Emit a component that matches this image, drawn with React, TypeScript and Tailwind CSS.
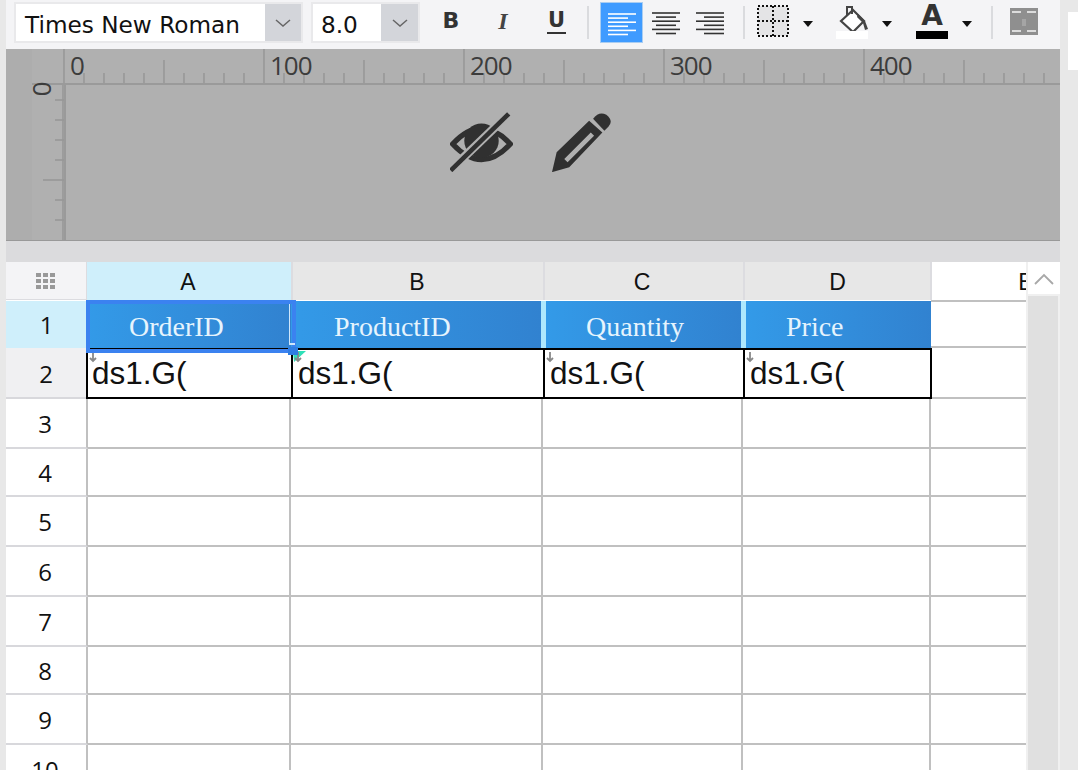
const rowFont = "font-['Open_Sans',sans-serif] text-[24px] text-[#111]"

function Chevron() {
  return (
    <svg width="16" height="8" viewBox="0 0 16 8" fill="none" stroke="#666" strokeWidth="1.5">
      <path d="M1 1l7 6 7-6" />
    </svg>
  )
}

function Caret({ className = '' }: { className?: string }) {
  return (
    <svg className={className} width="10" height="6" viewBox="0 0 10 6" fill="#111">
      <path d="M0 0h10L5 6z" />
    </svg>
  )
}

function Separator({ className = '' }: { className?: string }) {
  return <div className={`w-[2px] h-[33px] mt-[6px] bg-[#dadbde] ${className}`} />
}

function AlignIcon({ lines, color }: { lines: [number, number][]; color: string }) {
  return (
    <svg width="28" height="24" viewBox="0 0 28 24" stroke={color} strokeWidth="1.6">
      {lines.map(([x1, x2], i) => (
        <line key={i} x1={x1} x2={x2} y1={1 + i * 4.1} y2={1 + i * 4.1} />
      ))}
    </svg>
  )
}

function Toolbar() {
  return (
    <div className="h-[49px] bg-[#f4f4f6] flex items-start pl-[8px] font-['DejaVu_Sans',sans-serif]">
      <div className="flex mt-[2px] w-[289px] h-[41px] border-2 border-[#e9e9eb]">
        <div className="w-[249px] bg-white text-[23.2px] leading-[41px] pl-[9px] text-[#111]">Times New Roman</div>
        <div className="flex-1 bg-[#d3d5da] flex items-center justify-center">
          <Chevron />
        </div>
      </div>
      <div className="flex mt-[2px] ml-[8px] w-[109px] h-[41px] border-2 border-[#e9e9eb]">
        <div className="w-[68px] bg-white text-[23.2px] leading-[41px] pl-[8px] text-[#111]">8.0</div>
        <div className="flex-1 bg-[#d3d5da] flex items-center justify-center">
          <Chevron />
        </div>
      </div>
      <div className="w-[14px]" />
      <div className="w-[34px] text-center font-bold text-[22px] leading-[42px] text-[#333]">B</div>
      <div className="w-[18px]" />
      <div className="w-[34px] text-center font-['Liberation_Serif',serif] italic font-bold text-[24px] leading-[42px] text-[#444]">I</div>
      <div className="w-[19px]" />
      <div className="w-[34px] text-center pl-[1px]">
        <div className="inline-block mt-[9px] border-b-2 border-[#333] text-[21px] leading-[23px] px-[1px] text-[#333] font-bold">U</div>
      </div>
      <div className="w-[14px]" />
      <Separator />
      <div className="w-[11px]" />
      <div className="w-[43px] h-[41px] mt-[2px] bg-[#3f9bff] border border-[#a9cdf2] flex items-start justify-center pt-[10px]">
        <AlignIcon color="#fff" lines={[[0, 28], [0, 20], [0, 28], [0, 20], [0, 28], [0, 20]]} />
      </div>
      <div className="w-[9px]" />
      <div className="w-[28px] mt-[12px]">
        <AlignIcon color="#333" lines={[[0, 28], [4, 24], [0, 28], [4, 24], [0, 28], [4, 24]]} />
      </div>
      <div className="w-[16px]" />
      <div className="w-[28px] mt-[12px]">
        <AlignIcon color="#333" lines={[[0, 28], [8, 28], [0, 28], [8, 28], [0, 28], [8, 28]]} />
      </div>
      <div className="w-[19px]" />
      <Separator />
      <div className="w-[12px]" />
      <svg className="mt-[5px]" width="32" height="32" viewBox="0 0 32 32">
        <rect x="1" y="1" width="30" height="30" fill="#e4e4e6" />
        <g fill="none" stroke="#111" strokeWidth="2" strokeDasharray="2 2">
          <rect x="1" y="1" width="30" height="30" />
          <path d="M16 1v30M1 16h30" />
        </g>
      </svg>
      <Caret className="mt-[21px] ml-[14px]" />
      <svg className="mt-[5px] ml-[23px]" width="34" height="35" viewBox="0 0 34 35">
        <path d="M5 16L17 5l11 11-11 11z" fill="#fff" stroke="#444" strokeWidth="2.2" />
        <path d="M11 11V2h5v7" fill="none" stroke="#444" strokeWidth="2" />
        <path d="M22 9l7 7 3 8-3 1-2-7-6-6z" fill="#444" />
        <rect x="0" y="26" width="32" height="8" fill="#fff" />
      </svg>
      <Caret className="mt-[21px] ml-[12px]" />
      <div className="w-[24px]" />
      <div className="w-[32px] mt-[1px] flex flex-col items-center">
        <div className="font-bold text-[28px] leading-[30px] h-[30px] text-[#333]">A</div>
        <div className="w-[32px] h-[8px] bg-black" />
      </div>
      <Caret className="mt-[21px] ml-[14px]" />
      <div className="w-[19px]" />
      <Separator />
      <svg className="mt-[8px] ml-[17px]" width="28" height="27" viewBox="0 0 28 27">
        <rect width="28" height="27" fill="#8f8f8f" />
        <path d="M2 3h9v2H2zM17 3h9v2h-9zM2 22h9v2H2zM17 22h9v2h-9z" fill="#dcdcdc" />
        <path d="M12 11h4v7h-4z" fill="#a5a5a5" />
      </svg>
    </div>
  )
}

function Ruler() {
  const ticks = Array.from({ length: 50 }, (_, i) => i)
  return (
    <div className="relative h-[36px] border-b-2 border-[#9a9a9a] flex items-start pl-[32px]">
      <svg className="absolute left-0 top-0" width="1028" height="34" stroke="#989898" strokeWidth="1.6">
        {ticks.map((i) => (
          <line key={i} x1={32 + i * 20} x2={32 + i * 20} y1={i % 10 === 0 ? 0 : i % 5 === 0 ? 11 : 24} y2={34} />
        ))}
      </svg>
      {['0', '100', '200', '300', '400'].map((n) => (
        <div key={n} className="relative w-[200px] last:w-[196px] shrink-0 pl-[6px] text-[26px] tracking-[-1px] leading-[32px] text-[#3c3c3c] font-['Open_Sans',sans-serif]">
          {n}
        </div>
      ))}
    </div>
  )
}

function VerticalRuler() {
  return (
    <div className="relative w-[34px] shrink-0 border-r-2 border-[#9a9a9a]">
      <svg className="absolute left-0 top-0" width="32" height="155" stroke="#989898" strokeWidth="1.6">
        <line x1="31" x2="31" y1="0" y2="155" />
        {[15, 35, 55, 75, 115, 135].map((y) => (
          <line key={y} x1="23" x2="32" y1={y} y2={y} />
        ))}
        <line x1="11" x2="32" y1="95" y2="95" />
      </svg>
      <div className="w-[22px] h-[12px] text-center rotate-90 text-[26px] leading-[12px] text-[#3c3c3c] font-['Open_Sans',sans-serif] -mt-[2px]">0</div>
    </div>
  )
}

function HiddenPreview() {
  return (
    <div className="flex h-[192px] bg-[#b0b0b0] border-b border-[#999]">
      <div className="w-[26px] bg-[#adadad]" />
      <div className="flex-1 flex flex-col min-w-0">
        <Ruler />
        <div className="flex flex-1">
          <VerticalRuler />
          <div className="flex-1 flex justify-center items-start gap-[39px] pt-[27px] pr-[66px]">
            <svg width="63" height="60" viewBox="150 64 190 180">
              <path d="M158 160Q245 66 332 160Q245 254 158 160z" fill="none" stroke="#303030" strokeWidth="16" />
              <circle cx="245" cy="150" r="52" fill="#303030" />
              <line x1="145" y1="245" x2="335" y2="62" stroke="#b0b0b0" strokeWidth="26" />
              <line x1="152" y1="240" x2="327" y2="69" stroke="#303030" strokeWidth="14" />
            </svg>
            <svg width="59" height="60" viewBox="458 64 178 180">
              <path
                d="M458 245L472 185L570 90L610 125L510 230ZM495 205L505 215L585 135L575 125Z"
                fill="#303030"
                fillRule="evenodd"
              />
              <path d="M582 84Q600 60 622 72Q645 90 628 108L616 120Z" fill="#303030" />
            </svg>
          </div>
        </div>
      </div>
    </div>
  )
}

function ColumnHeaders() {
  const base = "shrink-0 h-full flex items-center justify-center pt-[3px] border-r-2 border-[#dcdce0] font-['Liberation_Sans',sans-serif] text-[23px] text-[#111]"
  return (
    <div className="flex h-[38px] overflow-hidden">
      <div className="w-[81px] shrink-0 h-full bg-[#f4f4f6] border-r border-b border-[#dcdce0] flex items-center justify-center">
        <svg width="20" height="16" viewBox="0 0 20 16" fill="#999">
          {[0, 6, 12].map((y) =>
            [0, 7, 14].map((x) => <rect key={`${x}-${y}`} x={x} y={y} width="5" height="4" />),
          )}
        </svg>
      </div>
      <div className={`${base} w-[206px] pr-[2px] bg-[#cfeffb]`}>A</div>
      <div className={`${base} w-[252px] pr-[2px] bg-[#e7e7e7]`}>B</div>
      <div className={`${base} w-[200px] pr-[4px] bg-[#e7e7e7]`}>C</div>
      <div className={`${base} w-[187px] bg-[#e7e7e7]`}>D</div>
      <div className="w-[190px] shrink-0 h-full flex items-center justify-center pt-[3px] pr-[2px] bg-white font-['Liberation_Sans',sans-serif] text-[23px] text-[#111]">E</div>
    </div>
  )
}

function TitleRow() {
  const cell = "shrink-0 h-full flex items-center pt-[4px] bg-gradient-to-r from-[#339ae8] to-[#3182d0] font-['Liberation_Serif',serif] text-[28px] text-[#e6f4fd]"
  return (
    <div className="flex h-[48px] pt-px">
      <div className={`w-[81px] shrink-0 h-full bg-[#cfeffb] flex items-center justify-center ${rowFont}`}>1</div>
      <div className={`${cell} w-[204px] pl-[42px] relative`}>
        OrderID
        <div className="absolute -left-[1px] -top-[1px] w-[210px] h-[53px] border-4 border-[#3b82f0] z-10" />
        <div className="absolute left-[202px] top-[3px] w-px h-[41px] bg-[#cfe6fb] z-10" />
        <div className="absolute left-[202px] top-[42px] w-[6px] h-[2px] bg-[#cfe6fb] z-10" />
        <div className="absolute left-[201px] top-[46px] w-[10px] h-[8px] bg-[#2f7de1] z-20" />
      </div>
      <div className={`${cell} w-[255px] pl-[43px] border-r-[5px] border-[#aee8fd]`}>ProductID</div>
      <div className={`${cell} w-[200px] pl-[40px] border-r-[5px] border-[#aee8fd]`}>Quantity</div>
      <div className={`${cell} w-[185px] pl-[40px]`}>Price</div>
      <div className="flex-1 border-y-2 border-[#c0c0c0] -mt-px" />
    </div>
  )
}

function SmallArrow() {
  return (
    <svg className="absolute left-[1px] top-[2px]" width="8" height="11" viewBox="0 0 8 11" fill="none" stroke="#888" strokeWidth="1.8">
      <path d="M4 0v9M1 6l3 3 3-3" />
    </svg>
  )
}

function FormulaRow() {
  const cell = "relative shrink-0 h-full border-l-2 border-y-2 border-black font-['Liberation_Sans',sans-serif] text-[31.5px] leading-[47px] text-[#111]"
  return (
    <div className="flex h-[51px]">
      <div className={`w-[80px] shrink-0 h-full bg-[#f0f0f2] border-b-2 border-[#d8d8dc] flex items-center justify-center pt-[2px] ${rowFont}`}>2</div>
      <div className={`${cell} w-[205px] pl-[4px]`}>
        <SmallArrow />
        ds1.G(
      </div>
      <div className={`${cell} w-[252px] pl-[5px]`}>
        <svg className="absolute left-0 top-0" width="13" height="12" viewBox="0 0 13 12" fill="#2fe0b8">
          <path d="M0 1h13L1 12z" />
        </svg>
        <SmallArrow />
        ds1.G(
      </div>
      <div className={`${cell} w-[200px] pl-[5px]`}>
        <SmallArrow />
        ds1.G(
      </div>
      <div className={`${cell} w-[189px] pl-[5px] border-r-2`}>
        <SmallArrow />
        ds1.G(
      </div>
      <div className="flex-1 border-b-2 border-[#c0c0c0]" />
    </div>
  )
}

const emptyRows = [
  { n: 3, h: 'h-[50px]' },
  { n: 4, h: 'h-[48px]' },
  { n: 5, h: 'h-[50px]' },
  { n: 6, h: 'h-[50px]' },
  { n: 7, h: 'h-[50px]' },
  { n: 8, h: 'h-[48px]' },
  { n: 9, h: 'h-[50px]' },
  { n: 10, h: 'h-[50px]' },
]

function EmptyRow({ n, h }: { n: number; h: string }) {
  const cell = 'shrink-0 h-full border-r-2 border-b-2 border-[#c0c0c0]'
  return (
    <div className={`flex ${h}`}>
      <div className={`w-[82px] shrink-0 h-full bg-white border-r-2 border-r-[#c0c0c0] border-b-2 border-b-[#d8d8dc] flex items-center justify-center pt-[2px] pr-[2px] ${rowFont}`}>
        {n}
      </div>
      <div className={`${cell} w-[203px]`} />
      <div className={`${cell} w-[252px]`} />
      <div className={`${cell} w-[200px]`} />
      <div className={`${cell} w-[188px]`} />
      <div className="flex-1 h-full border-b-2 border-[#c0c0c0]" />
    </div>
  )
}

function Scrollbar() {
  return (
    <div className="w-[34px] shrink-0 flex flex-col bg-[#f0f0f0] pl-[2px] pr-[2px]">
      <div className="h-[2px] bg-white -mr-[2px]" />
      <div className="h-[30px] -mr-[2px] bg-white flex items-center justify-center">
        <svg width="20" height="12" viewBox="0 0 20 12" fill="none" stroke="#a8a8a8" strokeWidth="1.8">
          <path d="M1 11l9-9 9 9" />
        </svg>
      </div>
      <div className="flex-1 mt-[2px] bg-[#e0e0e0]" />
    </div>
  )
}

export default function App() {
  return (
    <div className="w-[1078px] h-[770px] overflow-hidden bg-[#e8e8e8] flex pl-[6px]">
      <div className="w-[1054px] shrink-0 flex flex-col">
        <Toolbar />
        <HiddenPreview />
        <div className="h-[21px] bg-[#dbdbdd]" />
        <div className="flex-1 flex min-h-0">
          <div className="w-[1020px] shrink-0 bg-white overflow-hidden">
            <ColumnHeaders />
            <TitleRow />
            <FormulaRow />
            {emptyRows.map((r) => (
              <EmptyRow key={r.n} n={r.n} h={r.h} />
            ))}
          </div>
          <Scrollbar />
        </div>
      </div>
      <div className="flex-1 pt-[12px] pl-[8px]">
        <div className="h-[58px] bg-white" />
      </div>
    </div>
  )
}
